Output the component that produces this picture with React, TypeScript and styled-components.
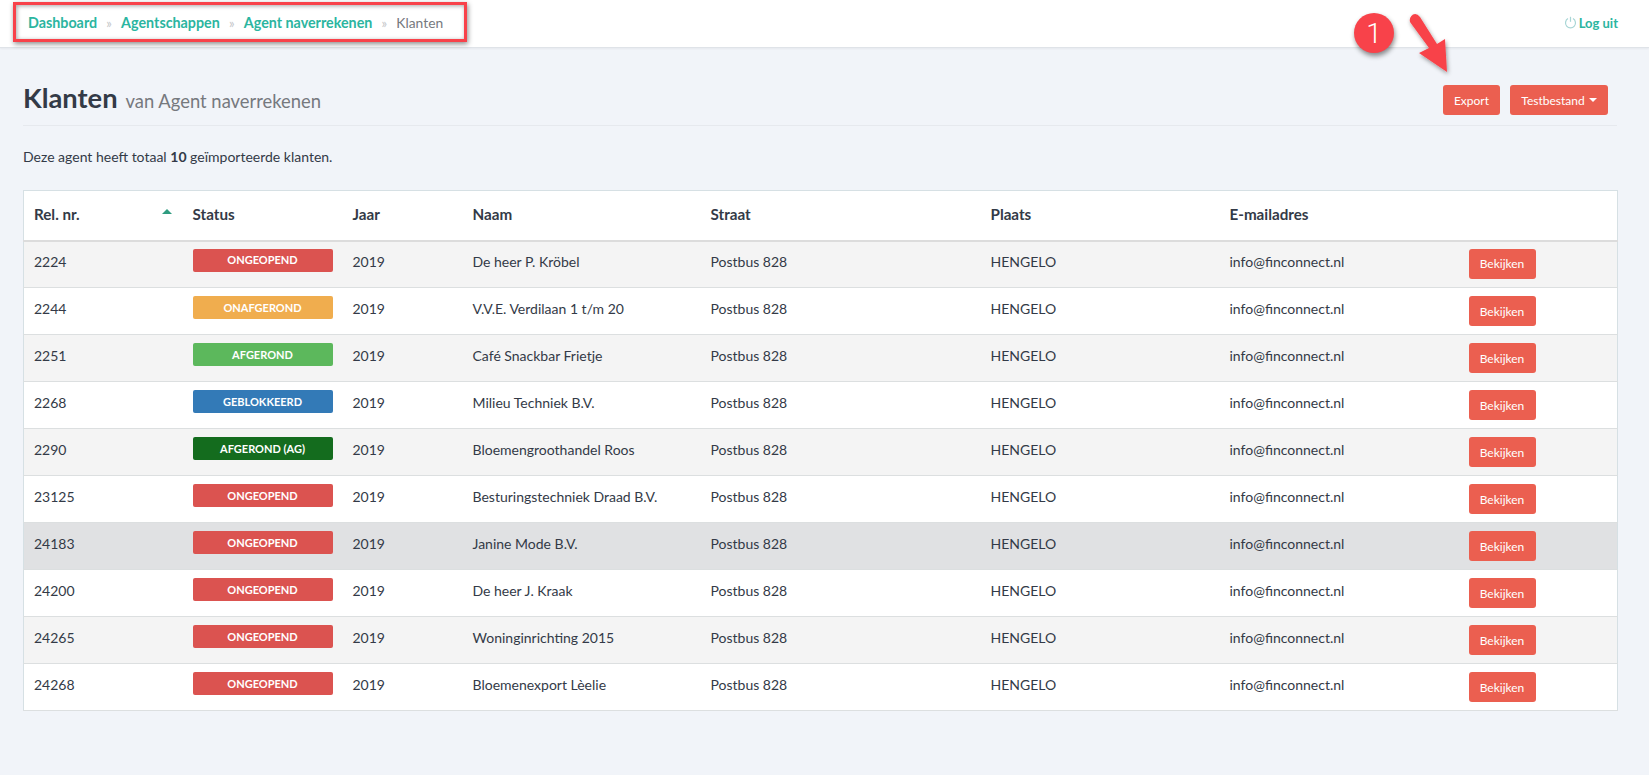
import React from 'react';
import styled, { createGlobalStyle } from 'styled-components';

const Global = createGlobalStyle`
  html, body { margin: 0; padding: 0; background: #f1f4f9; }
  body { font-family: "Lato", "Liberation Sans", sans-serif; font-size: 14px; color: #333a47; }
  #root { min-height: 775px; }
`;

const Page = styled.div`
  position: relative;
  width: 1649px;
  height: 775px;
  overflow: hidden;
`;

const TopBar = styled.header`
  height: 48px;
  box-sizing: border-box;
  background: #fff;
  border-bottom: 1px solid #dfe3e8;
  box-shadow: 0 1px 2px rgba(0, 0, 0, 0.05);
  display: flex;
  align-items: center;
  justify-content: space-between;
  padding: 0 31px 2px 28px;
`;

const Crumbs = styled.nav`
  display: flex;
  align-items: center;
  font-size: 14.3px;
`;

const Crumb = styled.a`
  color: #2bb5a0;
  font-weight: 700;
  text-decoration: none;
`;

const CrumbCurrent = styled.span`
  color: #76797e;
  font-size: 13.8px;
`;

const CrumbSep = styled.span`
  color: #c4c6c9;
  font-size: 13px;
  padding: 0 9.2px;
`;

const Logout = styled.a`
  display: flex;
  align-items: center;
  gap: 2px;
  color: #2bb5a0;
  font-size: 13px;
  font-weight: 700;
`;

const Content = styled.main`
  padding: 0 32px 0 23px;
`;

const TitleRow = styled.div`
  height: 78px;
  box-sizing: border-box;
  border-bottom: 1px solid #e6e9ee;
  display: flex;
  align-items: flex-end;
  justify-content: space-between;
  padding-bottom: 10px;
`;

const Title = styled.h1`
  margin: 0 0 -4px;
  font-size: 27.3px;
  line-height: 36px;
  font-weight: 700;
  color: #333a47;
`;

const Subtitle = styled.small`
  font-size: 18.4px;
  font-weight: 400;
  color: #76797e;
  margin-left: 8px;
`;

const Actions = styled.div`
  display: flex;
  gap: 10px;
  margin-right: 9px;
`;

const Button = styled.button<{ $w: number }>`
  height: 30px;
  box-sizing: border-box;
  border: 0;
  border-radius: 3px;
  background: #eb5f50;
  color: #fff;
  font-family: inherit;
  font-size: 12px;
  font-weight: 400;
  display: inline-flex;
  align-items: center;
  justify-content: center;
  padding: 0;
  width: ${(p) => p.$w}px;
`;

const RowButton = styled(Button)`
  display: flex;
  margin-top: -3px;
`;

const Caret = styled.span`
  display: inline-block;
  margin-left: 4px;
  border-left: 4px solid transparent;
  border-right: 4px solid transparent;
  border-top: 4px solid #fff;
`;

const Intro = styled.p`
  margin: 21px 0 23px;
  line-height: 20px;
  font-size: 14px;
  color: #333a47;
`;

const Table = styled.table`
  width: 1594px;
  table-layout: fixed;
  border-collapse: collapse;
  background: #fff;
  border: 1px solid #d6e0e4;

  tbody tr:first-child td {
    padding-top: 10px;
  }
`;

const Th = styled.th<{ $w: number }>`
  height: 50px;
  padding: 0 10px 3px;
  box-sizing: border-box;
  text-align: left;
  font-size: 15.2px;
  font-weight: 700;
  color: #333a47;
  border-bottom: 2px solid #dcdcdc;
  position: relative;
  width: ${(p) => p.$w}px;
`;

const SortMark = styled.span`
  position: absolute;
  right: 11px;
  top: 18px;
  border-left: 5px solid transparent;
  border-right: 5px solid transparent;
  border-bottom: 5px solid #2f9c80;
`;

const Row = styled.tr<{ $tone: string }>`
  background: ${(p) => p.$tone};
`;

const Td = styled.td`
  height: 47px;
  box-sizing: border-box;
  padding: 11px 10px 0;
  vertical-align: top;
  line-height: 20px;
  font-size: 14px;
  color: #333a47;
  border-bottom: 1px solid #dcdfe0;
  white-space: nowrap;
`;

const Badge = styled.span<{ $bg: string }>`
  display: flex;
  align-items: center;
  justify-content: center;
  width: 140px;
  height: 23px;
  margin-top: -3px;
  border-radius: 2px;
  background: ${(p) => p.$bg};
  color: #fff;
  font-size: 11px;
  font-weight: 700;
`;

const Annotation = styled.svg`
  position: absolute;
  overflow: visible;
  left: 0;
  top: 0;
  pointer-events: none;
`;

const Highlight = styled.div`
  position: absolute;
  left: 13px;
  top: 2px;
  width: 454px;
  height: 40px;
  box-sizing: border-box;
  border: 3px solid #f8424a;
  box-shadow: 1px 2px 5px rgba(0, 0, 0, 0.45), inset 1px 1px 4px rgba(0, 0, 0, 0.35);
  pointer-events: none;
`;

const Marker = styled.div`
  position: absolute;
  left: 1354px;
  top: 13px;
  width: 40px;
  height: 40px;
  border-radius: 50%;
  background: #f8424a;
  box-shadow: 1px 3px 5px rgba(0, 0, 0, 0.45);
  color: #fff;
  font-family: "Roboto", sans-serif;
  font-weight: 300;
  font-size: 28px;
  display: flex;
  align-items: center;
  justify-content: center;
`;

const widths = [159, 160, 120, 238, 280, 239, 239, 159];

const R = { bg: '#db5350', t: 'ONGEOPEND' };
const O = { bg: '#f0ad4e', t: 'ONAFGEROND' };
const G = { bg: '#5cb85c', t: 'AFGEROND' };
const B = { bg: '#337ab7', t: 'GEBLOKKEERD' };
const D = { bg: '#146c1e', t: 'AFGEROND (AG)' };

const rows = [
  ['2224', R, 'De heer P. Kröbel'],
  ['2244', O, 'V.V.E. Verdilaan 1 t/m 20'],
  ['2251', G, 'Café Snackbar Frietje'],
  ['2268', B, 'Milieu Techniek B.V.'],
  ['2290', D, 'Bloemengroothandel Roos'],
  ['23125', R, 'Besturingstechniek Draad B.V.'],
  ['24183', R, 'Janine Mode B.V.'],
  ['24200', R, 'De heer J. Kraak'],
  ['24265', R, 'Woninginrichting 2015'],
  ['24268', R, 'Bloemenexport Lèelie'],
] as const;

const heads = ['Rel. nr.', 'Status', 'Jaar', 'Naam', 'Straat', 'Plaats', 'E-mailadres', ''];

export default function App() {
  return (
    <Page>
      <Global />
      <TopBar>
        <Crumbs>
          <Crumb>Dashboard</Crumb>
          <CrumbSep>»</CrumbSep>
          <Crumb>Agentschappen</Crumb>
          <CrumbSep>»</CrumbSep>
          <Crumb>Agent naverrekenen</Crumb>
          <CrumbSep>»</CrumbSep>
          <CrumbCurrent>Klanten</CrumbCurrent>
        </Crumbs>
        <Logout>
          <svg width="13" height="13" viewBox="0 0 13 13" fill="none" stroke="#a9d6d6" strokeWidth="1.2">
            <path d="M4 2.6a5 5 0 1 0 5 0" />
            <path d="M6.5 0.8v5" />
          </svg>
          Log uit
        </Logout>
      </TopBar>
      <Content>
        <TitleRow>
          <Title>
            Klanten<Subtitle>van Agent naverrekenen</Subtitle>
          </Title>
          <Actions>
            <Button $w={57}>Export</Button>
            <Button $w={98}>
              Testbestand<Caret />
            </Button>
          </Actions>
        </TitleRow>
        <Intro>
          Deze agent heeft totaal <strong>10</strong> geïmporteerde klanten.
        </Intro>
        <Table>
          <thead>
            <tr>
              {heads.map((h, i) => (
                <Th key={i} $w={widths[i]}>
                  {h}
                  {i === 0 && <SortMark />}
                </Th>
              ))}
            </tr>
          </thead>
          <tbody>
            {rows.map(([nr, st, name], i) => (
              <Row key={nr} $tone={i === 6 ? '#e0e1e3' : i % 2 === 0 ? '#f4f4f4' : '#ffffff'}>
                <Td>{nr}</Td>
                <Td>
                  <Badge $bg={st.bg}>{st.t}</Badge>
                </Td>
                <Td>2019</Td>
                <Td>{name}</Td>
                <Td>Postbus 828</Td>
                <Td>HENGELO</Td>
                <Td>info@finconnect.nl</Td>
                <Td>
                  <RowButton $w={67}>Bekijken</RowButton>
                </Td>
              </Row>
            ))}
          </tbody>
        </Table>
      </Content>
      <Highlight />
      <Marker>1</Marker>
      <Annotation width="1649" height="775">
        <defs>
          <filter id="sh" x="-30%" y="-30%" width="170%" height="170%">
            <feDropShadow dx="1" dy="2" stdDeviation="2" floodOpacity="0.4" />
          </filter>
        </defs>
        <path
          d="M1410 22 Q1409 17 1413 14.5 Q1417 13 1420 17 L1437 44 L1445 39 L1447 72 L1419 53 L1429 48 Z"
          fill="#f8424a"
          filter="url(#sh)"
        />
      </Annotation>
    </Page>
  );
}
